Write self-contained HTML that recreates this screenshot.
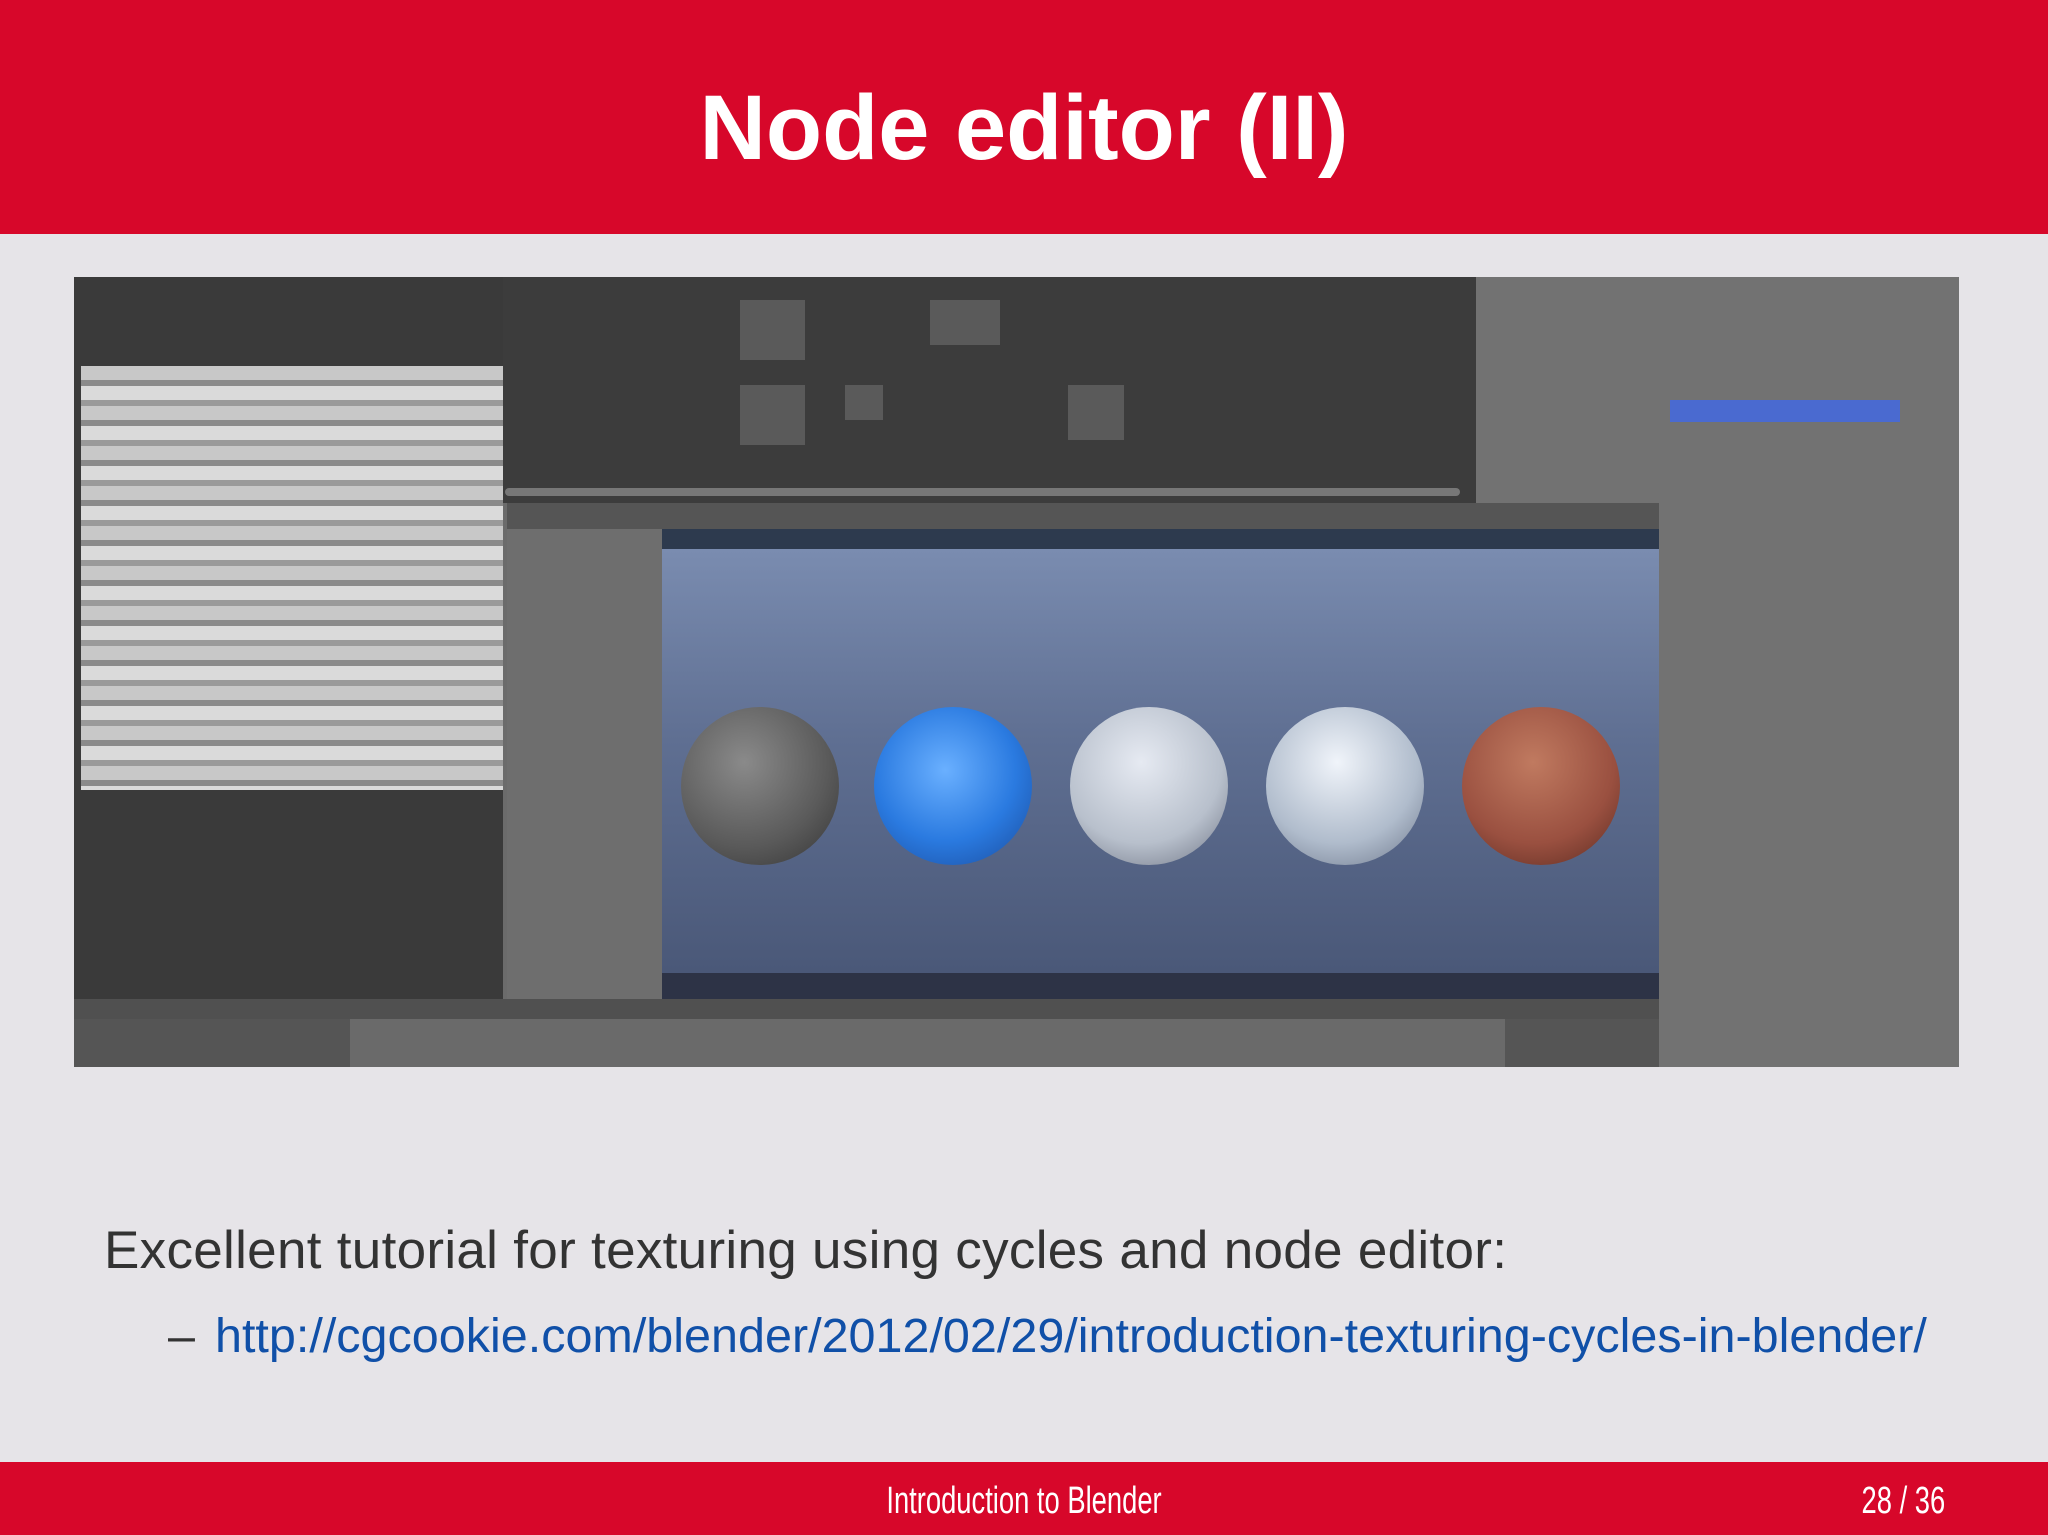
<!DOCTYPE html>
<html><head><meta charset="utf-8"><style>
*{margin:0;padding:0;box-sizing:border-box}
body{width:2048px;height:1535px;background:#e6e4e8;position:relative;overflow:hidden;font-family:"Liberation Sans",sans-serif}
.hdr{position:absolute;left:0;top:0;width:2048px;height:234px;background:#d7072a}
.hdr h1{position:absolute;width:100%;top:78px;text-align:center;color:#fff;font-size:92px;font-weight:bold;line-height:100px}
.ftr{position:absolute;left:0;top:1462px;width:2048px;height:73px;background:#d7072a;color:#fff}
.ftr .c{position:absolute;left:0;width:2048px;text-align:center;top:18px;font-size:38px;font-family:"Liberation Sans Narrow","Liberation Sans",sans-serif;transform:scaleX(.72);}
.ftr .r{position:absolute;right:103px;top:18px;font-size:38px;font-family:"Liberation Sans Narrow","Liberation Sans",sans-serif;transform:scaleX(.72);transform-origin:right}
.a{position:absolute}
.t1{position:absolute;left:104px;top:1220px;font-size:53px;color:#333;letter-spacing:.3px}
.t2{position:absolute;left:168px;top:1308px;font-size:48.5px;color:#333}
.t2 span{color:#1050a8;margin-left:20px}
</style></head><body>
<div class="hdr"><h1>Node editor (II)</h1></div>
<div class="a" style="left:74px;top:277px;width:1885px;height:790px;background:#6b6b6b"></div>
<div class="a" style="left:74px;top:277px;width:429px;height:722px;background:#3a3a3a"></div>
<div class="a" style="left:81px;top:366px;width:422px;height:424px;background:repeating-linear-gradient(180deg,#c8c8c8 0 14px,#8a8a8a 14px 20px,#dadada 20px 34px,#9a9a9a 34px 40px)"></div>
<div class="a" style="left:503px;top:277px;width:973px;height:226px;background:#3c3c3c"></div>
<div class="a" style="left:740px;top:300px;width:65px;height:60px;background:#5a5a5a"></div>
<div class="a" style="left:740px;top:385px;width:65px;height:60px;background:#5a5a5a"></div>
<div class="a" style="left:930px;top:300px;width:70px;height:45px;background:#5a5a5a"></div>
<div class="a" style="left:1068px;top:385px;width:56px;height:55px;background:#5a5a5a"></div>
<div class="a" style="left:845px;top:385px;width:38px;height:35px;background:#5a5a5a"></div>
<div class="a" style="left:505px;top:488px;width:955px;height:8px;background:#777;border-radius:4px"></div>
<div class="a" style="left:1476px;top:277px;width:183px;height:226px;background:#727272"></div>
<div class="a" style="left:507px;top:503px;width:1152px;height:26px;background:#555"></div>
<div class="a" style="left:507px;top:529px;width:155px;height:470px;background:#6e6e6e"></div>
<div class="a" style="left:662px;top:529px;width:997px;height:20px;background:#2d3a4e"></div>
<div class="a" style="left:662px;top:549px;width:997px;height:424px;background:linear-gradient(180deg,#7a8cb0 0%,#5f6f92 45%,#4a5878 100%)"></div>
<div class="a" style="left:662px;top:973px;width:997px;height:26px;background:#2d3346"></div>
<div class="a" style="left:681px;top:707px;width:158px;height:158px;border-radius:50%;background:radial-gradient(circle at 40% 35%,#8a8a8a,#5a5a5a 60%,#333)"></div>
<div class="a" style="left:874px;top:707px;width:158px;height:158px;border-radius:50%;background:radial-gradient(circle at 45% 40%,#6ab0ff,#2a7ae0 55%,#1a4a9a)"></div>
<div class="a" style="left:1070px;top:707px;width:158px;height:158px;border-radius:50%;background:radial-gradient(circle at 45% 35%,#e6eaf2,#b8c0cc 60%,#6a7080)"></div>
<div class="a" style="left:1266px;top:707px;width:158px;height:158px;border-radius:50%;background:radial-gradient(circle at 45% 35%,#f0f4fa,#b0bccc 60%,#6a7488)"></div>
<div class="a" style="left:1462px;top:707px;width:158px;height:158px;border-radius:50%;background:radial-gradient(circle at 45% 35%,#c07a60,#9a5040 60%,#5a2a20)"></div>
<div class="a" style="left:1659px;top:277px;width:300px;height:790px;background:#727272"></div>
<div class="a" style="left:1670px;top:400px;width:230px;height:22px;background:#4a6ad0"></div>
<div class="a" style="left:74px;top:999px;width:1585px;height:20px;background:#505050"></div>
<div class="a" style="left:74px;top:1019px;width:1585px;height:48px;background:#555"></div>
<div class="a" style="left:350px;top:1019px;width:1155px;height:48px;background:#6a6a6a"></div>
<div class="t1">Excellent tutorial for texturing using cycles and node editor:</div>
<div class="t2">–<span>http://cgcookie.com/blender/2012/02/29/introduction-texturing-cycles-in-blender/</span></div>
<div class="ftr"><div class="c">Introduction to Blender</div><div class="r">28 / 36</div></div>
</body></html>
